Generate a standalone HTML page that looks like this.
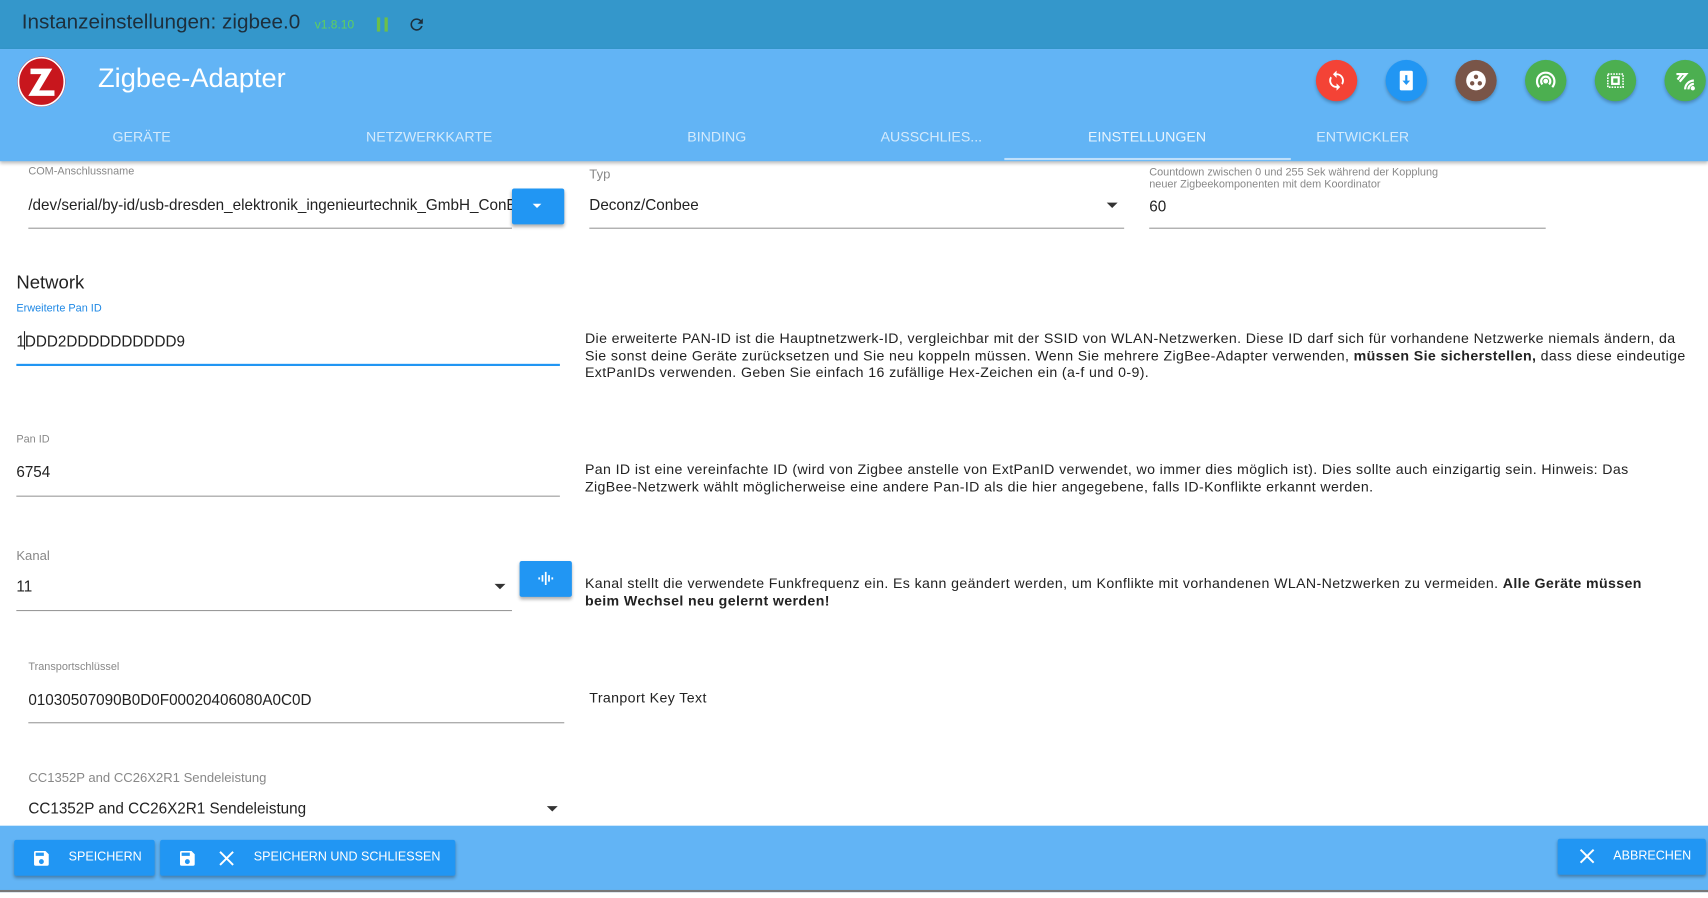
<!DOCTYPE html>
<html><head><meta charset="utf-8"><style>
html,body{margin:0;padding:0;width:1708px;height:897px;overflow:hidden;background:#fff}
#w{position:absolute;left:0;top:0;width:1568px;height:824px;transform:scale(1.0893);transform-origin:0 0;font-family:"Liberation Sans",sans-serif;color:#222}
.a{position:absolute;white-space:nowrap}
.top{left:0;top:0;width:1568px;height:45px;background:#3497cb}
.hdr{left:0;top:45px;width:1568px;height:103px;background:#62b4f5;box-shadow:0 2px 3px rgba(0,0,0,.25)}
.rb{position:absolute;width:38px;height:38px;border-radius:50%;top:55px;box-shadow:0 2px 3px rgba(0,0,0,.25)}
.tab{position:absolute;top:118px;font-size:13px;color:rgba(255,255,255,.72);transform:translateX(-50%)}
.lbl{font-size:10px;color:#888}
.val{font-size:14px;color:#222}
.ul{position:absolute;height:1px;background:#999}
.d{font-size:13px;color:#222;line-height:15.7px;letter-spacing:.35px}
.btn{position:absolute;background:#2196f3;color:#fff;font-size:11.5px;box-shadow:0 2px 3px rgba(0,0,0,.3);border-radius:2px}
.car{position:absolute;width:0;height:0;border-left:5px solid transparent;border-right:5px solid transparent;border-top:5px solid #333}
</style></head><body><div id="w">
<div class="a top"></div>
<div class="a" style="left:20px;top:10px;font-size:19px;color:#1d2f3c">Instanzeinstellungen: zigbee.0</div>
<div class="a" style="left:289px;top:17px;font-size:11px;color:#5ed05e">v1.8.10</div>
<div class="a" style="left:346px;top:16px;width:3px;height:13px;background:#6cbf4a"></div>
<div class="a" style="left:353px;top:16px;width:3px;height:13px;background:#6cbf4a"></div>
<svg class="a" style="left:374px;top:14px" width="17" height="17" viewBox="0 0 24 24"><path d="M17.65 6.35A7.96 7.96 0 0 0 12 4a8 8 0 1 0 7.73 10h-2.08A6 6 0 1 1 12 6c1.66 0 3.14.69 4.22 1.78L13 11h7V4z" fill="#1d2f3c"/></svg>
<div class="a hdr"></div>
<svg class="a" style="left:14px;top:50px" width="48" height="50" viewBox="0 0 48 50"><ellipse cx="24" cy="25" rx="22" ry="23" fill="#c8161d"/><ellipse cx="24" cy="25" rx="21" ry="22" fill="none" stroke="#fff" stroke-width="1.5"/><path d="M14 13h20l-12 20h14v5H12l12-20H14z" fill="#fff"/></svg>
<div class="a" style="left:90px;top:58px;font-size:25px;color:#fff">Zigbee-Adapter</div>
<div class="rb" style="left:1208px;background:#f44336"></div>
<svg class="a" style="left:1217px;top:64px" width="20" height="20" viewBox="0 0 24 24"><path d="M12 4V1L8 5l4 4V6a6 6 0 0 1 5.2 9l1.5 1.5A8 8 0 0 0 12 4zm0 14a6 6 0 0 1-5.2-9L5.3 7.5A8 8 0 0 0 12 20v3l4-4-4-4z" fill="#fff"/></svg>
<div class="rb" style="left:1272px;background:#2196f3"></div>
<svg class="a" style="left:1282px;top:64px" width="18" height="20" viewBox="0 0 18 20"><rect x="3" y="1" width="12" height="18" rx="1.5" fill="#fff"/><path d="M8 5h2v5h2.5L9 14 5.5 10H8z" fill="#2196f3"/></svg>
<div class="rb" style="left:1336px;background:#795548"></div>
<svg class="a" style="left:1345px;top:64px" width="20" height="20" viewBox="0 0 20 20"><circle cx="10" cy="10" r="9" fill="#fff"/><circle cx="10" cy="6.5" r="2" fill="#795548"/><circle cx="6.5" cy="12.5" r="2" fill="#795548"/><circle cx="13.5" cy="12.5" r="2" fill="#795548"/></svg>
<div class="rb" style="left:1400px;background:#4caf50"></div>
<svg class="a" style="left:1409px;top:64px" width="20" height="20" viewBox="0 0 20 20" fill="none" stroke="#fff" stroke-width="2"><path d="M4 16a8 8 0 1 1 12 0"/><path d="M7 13.5a4.2 4.2 0 1 1 6 0"/><circle cx="10" cy="10.5" r="1.2" fill="#fff"/></svg>
<div class="rb" style="left:1464px;background:#4caf50"></div>
<svg class="a" style="left:1473px;top:64px" width="20" height="20" viewBox="0 0 20 20" fill="none" stroke="#fff"><rect x="3" y="4" width="14" height="12" stroke-dasharray="1.5 1" stroke-width="1.5"/><rect x="7" y="7" width="6" height="6" stroke-width="2"/></svg>
<div class="rb" style="left:1528px;background:#4caf50"></div>
<svg class="a" style="left:1537px;top:64px" width="20" height="20" viewBox="0 0 20 20" fill="none" stroke="#fff" stroke-width="2"><path d="M2 4h5l-4 5M7 4h4L5 11"/><path d="M10 18a8 8 0 0 1 8-8M13 18a5 5 0 0 1 5-5"/><circle cx="17" cy="17" r="1" fill="#fff"/></svg>
<div class="tab" style="left:130px">GERÄTE</div>
<div class="tab" style="left:394px">NETZWERKKARTE</div>
<div class="tab" style="left:658px">BINDING</div>
<div class="tab" style="left:855px">AUSSCHLIES...</div>
<div class="tab" style="left:1053px;color:rgba(255,255,255,.85)">EINSTELLUNGEN</div>
<div class="tab" style="left:1251px">ENTWICKLER</div>
<div class="a" style="left:922px;top:145px;width:263px;height:2px;background:#bfe0fb"></div>

<div class="a lbl" style="left:26px;top:152px">COM-Anschlussname</div>
<div class="a val" style="left:26px;top:180px;width:444px;overflow:hidden">/dev/serial/by-id/usb-dresden_elektronik_ingenieurtechnik_GmbH_ConBee_II</div>
<div class="ul" style="left:26px;top:209px;width:444px"></div>
<div class="btn" style="left:470px;top:173px;width:48px;height:33px"></div>
<div class="car" style="left:489px;top:187px;border-top-color:#fff;border-width:4px 4px 0"></div>
<div class="a" style="left:541px;top:153px;font-size:12px;color:#888">Typ</div>
<div class="a val" style="left:541px;top:180px">Deconz/Conbee</div>
<div class="car" style="left:1016px;top:186px"></div>
<div class="ul" style="left:541px;top:209px;width:491px"></div>
<div class="a lbl" style="left:1055px;top:153px;line-height:11px">Countdown zwischen 0 und 255 Sek während der Kopplung<br>neuer Zigbeekomponenten mit dem Koordinator</div>
<div class="a val" style="left:1055px;top:181px">60</div>
<div class="ul" style="left:1055px;top:209px;width:364px"></div>

<div class="a" style="left:15px;top:250px;font-size:17px;color:#222">Network</div>
<div class="a" style="left:15px;top:278px;font-size:10px;color:#1e88e5">Erweiterte Pan ID</div>
<div class="a val" style="left:15px;top:305px">1DDD2DDDDDDDDDD9</div>
<div class="a" style="left:22px;top:304px;width:1px;height:17px;background:#222"></div>
<div class="a" style="left:15px;top:334px;width:499px;height:2px;background:#2196f3"></div>
<div class="a d" style="left:537px;top:303px">Die erweiterte PAN-ID ist die Hauptnetzwerk-ID, vergleichbar mit der SSID von WLAN-Netzwerken. Diese ID darf sich für vorhandene Netzwerke niemals ändern, da<br>Sie sonst deine Geräte zurücksetzen und Sie neu koppeln müssen. Wenn Sie mehrere ZigBee-Adapter verwenden, <b>müssen Sie sicherstellen,</b> dass diese eindeutige<br>ExtPanIDs verwenden. Geben Sie einfach 16 zufällige Hex-Zeichen ein (a-f und 0-9).</div>

<div class="a lbl" style="left:15px;top:398px">Pan ID</div>
<div class="a val" style="left:15px;top:425px">6754</div>
<div class="ul" style="left:15px;top:455px;width:499px"></div>
<div class="a d" style="left:537px;top:423px">Pan ID ist eine vereinfachte ID (wird von Zigbee anstelle von ExtPanID verwendet, wo immer dies möglich ist). Dies sollte auch einzigartig sein. Hinweis: Das<br>ZigBee-Netzwerk wählt möglicherweise eine andere Pan-ID als die hier angegebene, falls ID-Konflikte erkannt werden.</div>

<div class="a" style="left:15px;top:503px;font-size:12px;color:#888">Kanal</div>
<div class="a val" style="left:15px;top:530px">11</div>
<div class="car" style="left:454px;top:536px"></div>
<div class="ul" style="left:15px;top:560px;width:455px"></div>
<div class="btn" style="left:477px;top:515px;width:48px;height:33px"></div>
<svg class="a" style="left:492px;top:522px" width="18" height="18" viewBox="0 0 18 18" stroke="#fff" stroke-width="1.6"><path d="M3 8v2M6 6v6M9 3v12M12 6v6M15 8v2"/></svg>
<div class="a d" style="left:537px;top:528px">Kanal stellt die verwendete Funkfrequenz ein. Es kann geändert werden, um Konflikte mit vorhandenen WLAN-Netzwerken zu vermeiden. <b>Alle Geräte müssen</b><br><b>beim Wechsel neu gelernt werden!</b></div>

<div class="a lbl" style="left:26px;top:607px">Transportschlüssel</div>
<div class="a val" style="left:26px;top:634px">01030507090B0D0F00020406080A0C0D</div>
<div class="ul" style="left:26px;top:663px;width:492px"></div>
<div class="a d" style="left:541px;top:633px">Tranport Key Text</div>

<div class="a" style="left:26px;top:707px;font-size:12px;color:#888">CC1352P and CC26X2R1 Sendeleistung</div>
<div class="a val" style="left:26px;top:734px">CC1352P and CC26X2R1 Sendeleistung</div>
<div class="car" style="left:502px;top:740px"></div>

<div class="a" style="left:0;top:758px;width:1568px;height:59px;background:#62b4f5;border-bottom:2px solid #777"></div>
<div class="btn" style="left:13px;top:771px;width:129px;height:33px">
<svg class="a" style="left:16px;top:8px" width="18" height="18" viewBox="0 0 24 24"><path d="M17 3H5a2 2 0 0 0-2 2v14a2 2 0 0 0 2 2h14a2 2 0 0 0 2-2V7zm-5 16a3 3 0 1 1 0-6 3 3 0 0 1 0 6zm3-10H5V5h10z" fill="#fff"/></svg>
<span class="a" style="left:50px;top:10px">SPEICHERN</span></div>
<div class="btn" style="left:147px;top:771px;width:271px;height:33px">
<svg class="a" style="left:16px;top:8px" width="18" height="18" viewBox="0 0 24 24"><path d="M17 3H5a2 2 0 0 0-2 2v14a2 2 0 0 0 2 2h14a2 2 0 0 0 2-2V7zm-5 16a3 3 0 1 1 0-6 3 3 0 0 1 0 6zm3-10H5V5h10z" fill="#fff"/></svg>
<svg class="a" style="left:54px;top:10px" width="14" height="14" viewBox="0 0 14 14" stroke="#fff" stroke-width="1.8"><path d="M1 1l12 12M13 1L1 13"/></svg>
<span class="a" style="left:86px;top:10px">SPEICHERN UND SCHLIESSEN</span></div>
<div class="btn" style="left:1430px;top:770px;width:136px;height:33px">
<svg class="a" style="left:20px;top:9px" width="14" height="14" viewBox="0 0 14 14" stroke="#fff" stroke-width="1.8"><path d="M1 1l12 12M13 1L1 13"/></svg>
<span class="a" style="left:51px;top:10px">ABBRECHEN</span></div>
</div></body></html>
